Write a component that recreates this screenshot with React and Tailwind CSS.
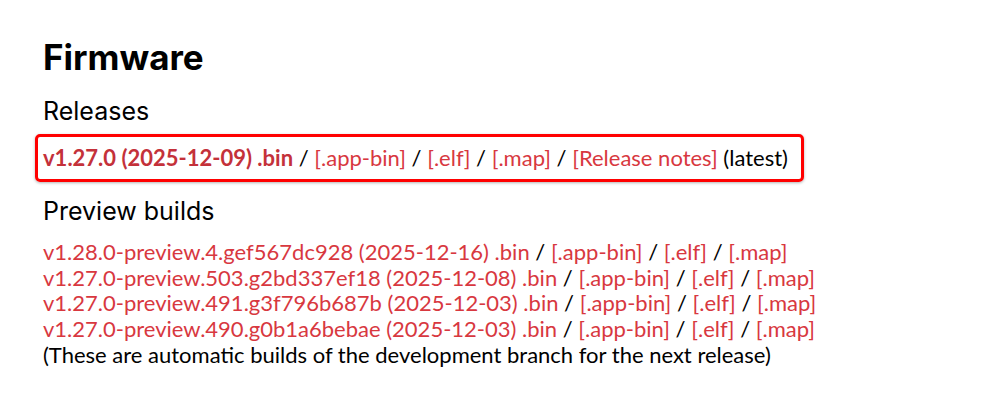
const previews = [
  { name: "v1.28.0-preview.4.gef567dc928 (2025-12-16) .bin" },
  { name: "v1.27.0-preview.503.g2bd337ef18 (2025-12-08) .bin" },
  { name: "v1.27.0-preview.491.g3f796b687b (2025-12-03) .bin" },
  { name: "v1.27.0-preview.490.g0b1a6bebae (2025-12-03) .bin" },
];

const link = "text-[#d8383f] hover:underline";

function Extras() {
  return (
    <>
      {" / "}
      <a href="#" className={link}>[.app-bin]</a>
      {" / "}
      <a href="#" className={link}>[.elf]</a>
      {" / "}
      <a href="#" className={link}>[.map]</a>
    </>
  );
}

export default function App() {
  return (
    <div className="min-h-screen bg-white text-black">
      <div className="pl-[43px] pt-[37px] font-['Lato',sans-serif] text-[22px] leading-[25.75px]">
        <h1 className="font-['Inter',sans-serif] text-[35px] font-bold leading-[40px]">
          Firmware
        </h1>
        <h2 className="mt-[19px] font-['Inter',sans-serif] text-[25px] font-normal leading-[30px]">
          Releases
        </h2>
        <div className="-ml-[8px] mt-[8px] inline-block rounded-[5px] border-[3px] border-[#f00] pl-[5px] pr-[13px] py-[8px] shadow-[0_1px_3px_rgba(0,0,0,0.3)]">
          <a href="#" className="font-bold text-[#c4313a]">
            v1.27.0 (2025-12-09) .bin
          </a>
          <Extras />
          {" / "}
          <a href="#" className={link}>[Release notes]</a> (latest)
        </div>
        <h2 className="mt-[14px] font-['Inter',sans-serif] text-[25px] font-normal leading-[30px]">
          Preview builds
        </h2>
        <div className="mt-[13px]">
          {previews.map((p) => (
            <div key={p.name}>
              <a href="#" className={link}>{p.name}</a>
              <Extras />
            </div>
          ))}
          <div>(These are automatic builds of the development branch for the next release)</div>
        </div>
      </div>
    </div>
  );
}
